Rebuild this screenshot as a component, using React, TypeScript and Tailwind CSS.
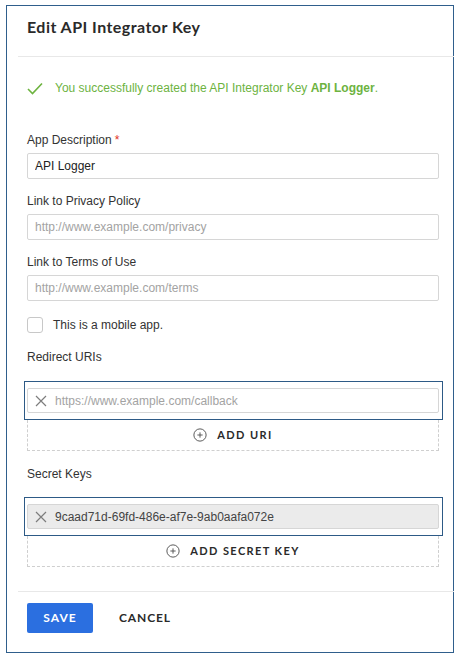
function PlusCircle() {
  return (
    <svg width="14" height="14" viewBox="0 0 16 16" fill="none" stroke="#555" strokeWidth="1.1">
      <circle cx="8" cy="8" r="7" />
      <path d="M8 5v6M5 8h6" />
    </svg>
  );
}

function CloseX() {
  return (
    <svg width="12" height="12" viewBox="0 0 12 12" fill="none" stroke="#7d7d7d" strokeWidth="1.2" className="shrink-0">
      <path d="M1 1l10 10M11 1L1 11" />
    </svg>
  );
}

function Field({ label, value, placeholder, required }: { label: string; value?: string; placeholder?: string; required?: boolean }) {
  return (
    <div className="mb-[15px]">
      <label className="block text-[12px] text-[#333] mb-[5px] leading-[15px]">
        {label}
        {required && <span className="text-[#e0301e] ml-[3px]">*</span>}
      </label>
      <input
        readOnly
        value={value}
        placeholder={placeholder}
        className="block w-full h-[26px] border border-[#d6d6d6] rounded-[2px] px-[7px] text-[12px] text-[#222] placeholder:text-[#a3a3a3] outline-none"
      />
    </div>
  );
}

function ListItem({ value, placeholder, gray }: { value?: string; placeholder?: string; gray?: boolean }) {
  return (
    <div className="-ml-[3px] -mr-[4px] border border-[#2d5a86] pt-[6px] pb-[6px] pl-[2px] pr-[3px]">
      <div
        className={
          "flex items-center h-[25px] border border-[#d6d6d6] rounded-[2px] px-[7px] " +
          (gray ? "bg-[#ebebeb]" : "bg-white")
        }
      >
        <CloseX />
        {value ? (
          <span className="ml-[8px] text-[12px] text-[#444]">{value}</span>
        ) : (
          <span className="ml-[8px] text-[12px] text-[#a3a3a3]">{placeholder}</span>
        )}
      </div>
    </div>
  );
}

function AddButton({ label }: { label: string }) {
  return (
    <div className="flex items-center justify-center gap-[10px] h-[31px] border border-dashed border-[#cfcfcf] border-t-0">
      <PlusCircle />
      <span className="text-[11px] font-bold tracking-[1.4px] text-[#2a2a2a] font-['Lato',sans-serif]">{label}</span>
    </div>
  );
}

export default function App() {
  return (
    <div className="w-[461px] h-[659px] bg-white pt-[5px] pl-[6px] font-['Liberation_Sans',Arial,sans-serif]">
      <div className="w-[448px] h-[648px] border-[1.5px] border-[#2f5e8c] bg-white flex flex-col">
        <div className="pt-[11px] h-[51px] ml-[11px] border-b border-[#e8e8e8] -mr-px">
          <h1 className="ml-[9px] text-[16px] leading-[20px] font-bold text-[#2a2a2a] tracking-[0.45px] font-['Lato',sans-serif]">
            Edit API Integrator Key
          </h1>
        </div>

        <div className="pl-[20px] pr-[14px] flex-1">
          <div className="flex items-center mt-[23px] mb-[36px] text-[12px] leading-[17px] text-[#6db33f]">
            <svg width="16" height="13" viewBox="0 0 16 13" fill="none" stroke="#6db33f" strokeWidth="1.6" className="mr-[12px]">
              <path d="M1 7l4.5 4.5L15 1.5" />
            </svg>
            <span>
              You successfully created the API Integrator Key <b>API Logger</b>.
            </span>
          </div>

          <Field label="App Description" required value="API Logger" />
          <Field label="Link to Privacy Policy" placeholder="http://www.example.com/privacy" />
          <Field label="Link to Terms of Use" placeholder="http://www.example.com/terms" />

          <div className="flex items-center mt-[3px] mb-[16px]">
            <div className="w-[16px] h-[16px] border border-[#c8c8c8] rounded-[3px] bg-white" />
            <span className="ml-[10px] text-[12px] text-[#333]">This is a mobile app.</span>
          </div>

          <div className="text-[12px] text-[#333] leading-[15px] mb-[16px]">Redirect URIs</div>
          <ListItem placeholder="https://www.example.com/callback" />
          <AddButton label="ADD URI" />

          <div className="text-[12px] text-[#333] leading-[15px] mt-[16px] mb-[15px]">Secret Keys</div>
          <ListItem value="9caad71d-69fd-486e-af7e-9ab0aafa072e" gray />
          <AddButton label="ADD SECRET KEY" />
        </div>

        <div className="ml-[11px] border-t border-[#e8e8e8] -mr-px" />
        <div className="flex items-center pl-[20px] pt-[11px] pb-[19px]">
          <button className="w-[66px] h-[30px] rounded-[2px] bg-[#2b6fe0] text-white text-[12px] font-bold tracking-[1px] font-['Lato',sans-serif]">
            SAVE
          </button>
          <button className="ml-[26px] text-[12px] font-bold tracking-[0.9px] text-[#2a2a2a] font-['Lato',sans-serif]">
            CANCEL
          </button>
        </div>
      </div>
    </div>
  );
}
